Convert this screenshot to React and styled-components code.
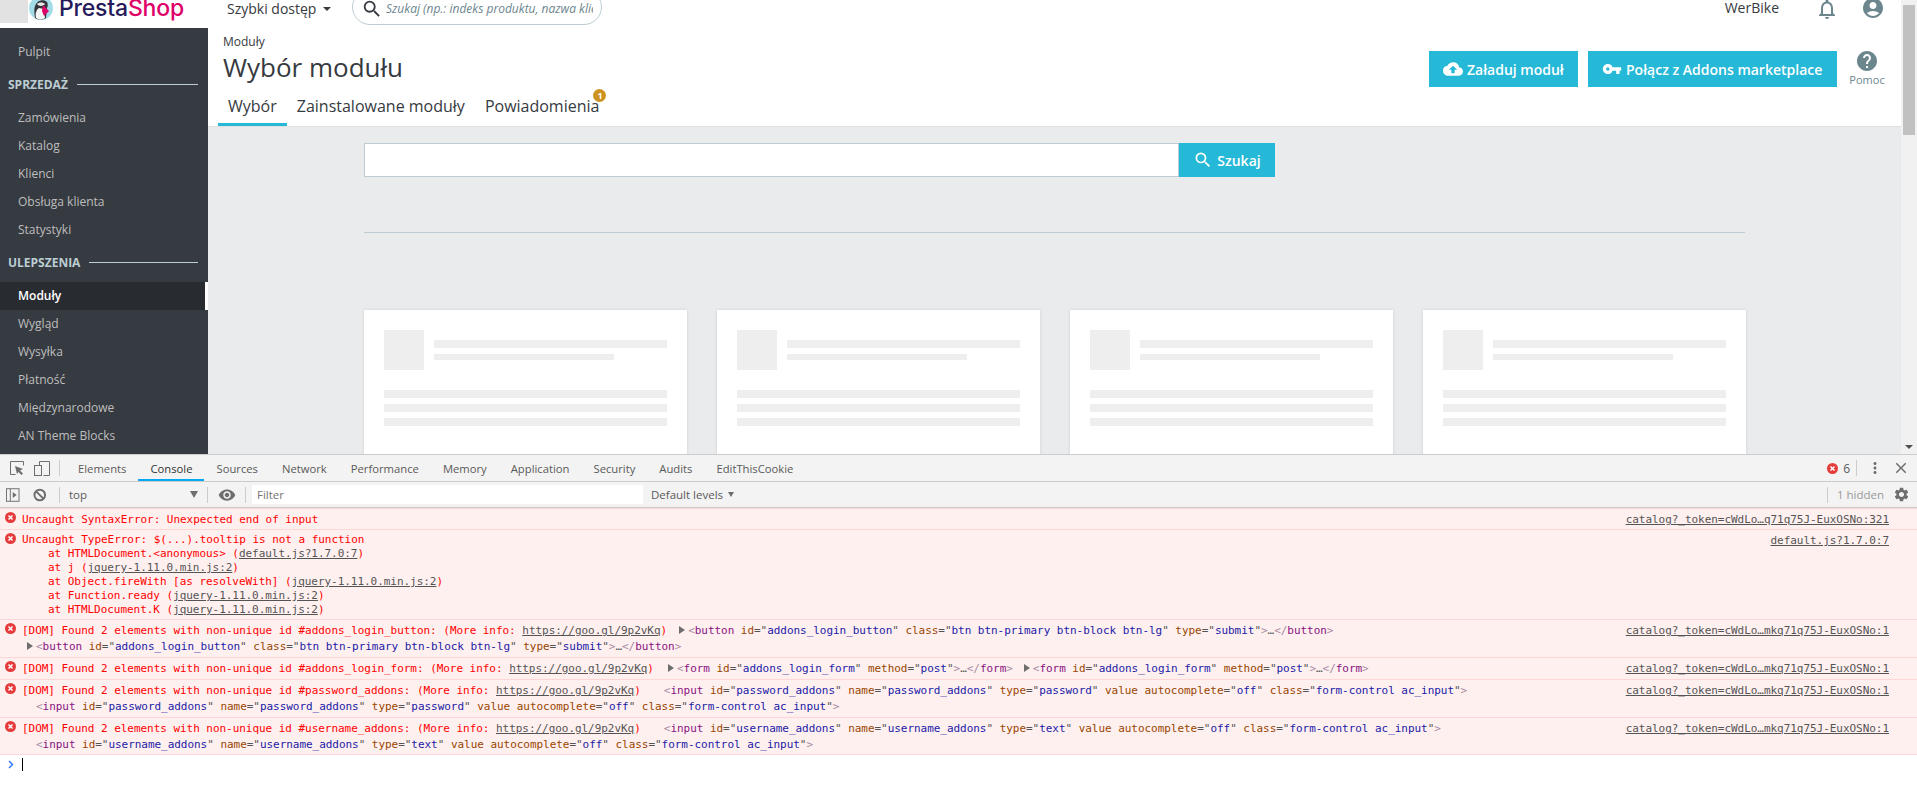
import styled, { createGlobalStyle } from "styled-components";
import {
  MdAccountCircle,
  MdClose,
  MdCloudUpload,
  MdHelp,
  MdMoreVert,
  MdNotificationsNone,
  MdRemoveRedEye,
  MdSearch,
  MdSettings,
  MdVpnKey,
} from "react-icons/md";

const Global = createGlobalStyle`
  html, body { margin: 0; padding: 0; height: 100%; overflow: hidden; }
  body { font-family: "Open Sans", sans-serif; background: #fff; }
  * { box-sizing: border-box; }
`;

const Wrap = styled.div`
  width: 1917px;
  height: 802px;
  display: flex;
  flex-direction: column;
  overflow: hidden;
`;

const Page = styled.div`
  height: 454px;
  display: flex;
  flex: none;
  overflow: hidden;
`;

const PageMain = styled.div`
  flex: 1;
  min-width: 0;
  display: flex;
  flex-direction: column;
`;

const Scrollbar = styled.div`
  width: 16px;
  background: #f1f1f1;
  padding: 5px 2px 0;
  display: flex;
  flex-direction: column;
  align-items: center;
`;

const Thumb = styled.div`
  width: 12px;
  height: 130px;
  background: #c1c1c1;
`;

const ScrollArrow = styled.div`
  margin-top: auto;
  margin-bottom: 5px;
  border-left: 4px solid transparent;
  border-right: 4px solid transparent;
  border-top: 4px solid #505050;
`;

/* header */
const Header = styled.header`
  height: 28px;
  flex: none;
  display: flex;
  align-items: flex-start;
  overflow: hidden;
  background: #fff;
  color: #363a41;
`;

const GreyBox = styled.div`
  width: 28px;
  height: 23px;
  background: #e2e2e2;
`;

const LogoMark = styled.svg`
  width: 24px;
  height: 24px;
  margin: -4px 0 0 1px;
  flex: none;
`;

const Brand = styled.div`
  margin: -7px 0 0 6px;
  width: 118px;
  font-family: Inter, sans-serif;
  font-size: 23px;
  line-height: 30px;
  font-weight: 500;
  letter-spacing: -0.2px;
  white-space: nowrap;
  color: #251b5b;
  span { color: #df0067; }
`;

const Quick = styled.div`
  margin-left: 50px;
  width: 125px;
  display: flex;
  align-items: center;
  gap: 7px;
  font-size: 14px;
  line-height: 18px;
  color: #363a41;
`;

const QuickCaret = styled.i`
  border-left: 4px solid transparent;
  border-right: 4px solid transparent;
  border-top: 4px solid #363a41;
`;

const HeadSearch = styled.div`
  width: 250px;
  height: 36px;
  margin-top: -11px;
  border: 1px solid #bbcdd2;
  border-radius: 18px;
  padding: 0 8px 0 8px;
  display: flex;
  align-items: center;
  gap: 3px;
  color: #363a41;
  svg { flex: none; margin-top: 3px; }
`;

const HeadPlaceholder = styled.div`
  font-size: 12px;
  font-style: italic;
  color: #6c868e;
  white-space: nowrap;
  overflow: hidden;
  width: 209px;
  margin-top: 3px;
`;

const ShopName = styled.div`
  margin-left: auto;
  margin-right: 36px;
  font-size: 14px;
  line-height: 16px;
  color: #363a41;
`;

const TopIcon = styled.div`
  margin-top: ${(p) => p.$top}px;
  margin-right: ${(p) => p.$right}px;
  height: 24px;
  color: #6c868e;
  display: flex;
`;

const Body = styled.div`
  flex: 1;
  display: flex;
  min-height: 0;
`;

/* sidebar */
const Sidebar = styled.nav`
  width: 208px;
  flex: none;
  background: #363a41;
  padding-top: 10px;
`;

const NavItem = styled.div`
  height: 28px;
  line-height: 28px;
  padding-left: 18px;
  font-size: 12px;
  color: ${(p) => (p.$active ? "#fff" : "#bebebe")};
  font-weight: ${(p) => (p.$active ? 600 : 400)};
  background: ${(p) => (p.$active ? "#282b30" : "transparent")};
  border-right: ${(p) => (p.$active ? "3px solid #fff" : "0")};
`;

const NavTitle = styled.div`
  height: 38px;
  padding: 0 10px 2px 8px;
  display: flex;
  align-items: center;
  gap: 9px;
  font-size: 12px;
  font-weight: 700;
  color: #bbcdd2;
  &::after {
    content: "";
    flex: 1;
    height: 1px;
    background: #bbcdd2;
  }
`;

/* content */
const Content = styled.main`
  flex: 1;
  min-width: 0;
  display: flex;
  flex-direction: column;
`;

const PageHead = styled.div`
  height: 99px;
  flex: none;
  display: flex;
  justify-content: space-between;
  background: #fff;
  border-bottom: 1px solid #dfdfdf;
`;

const HeadLeft = styled.div`
  padding-left: 10px;
  display: flex;
  flex-direction: column;
`;

const Crumb = styled.div`
  margin: 7px 0 0 5px;
  font-size: 12px;
  line-height: 14px;
  color: #363a41;
`;

const Title = styled.h1`
  margin: 0 0 0 5px;
  font-size: 26px;
  font-weight: 400;
  line-height: 36px;
  color: #363a41;
`;

const Tabs = styled.div`
  display: flex;
  margin-top: auto;
`;

const Tab = styled.div`
  position: relative;
  height: 38px;
  padding: 7px 10px 0;
  font-size: 16px;
  line-height: 22px;
  color: #363a41;
  border-bottom: 3px solid ${(p) => (p.$active ? "#25b9d7" : "transparent")};
`;

const Badge = styled.span`
  position: absolute;
  top: 1px;
  right: 3px;
  width: 13px;
  height: 13px;
  border-radius: 50%;
  background: #cd9321;
  color: #fff;
  font-size: 9px;
  font-weight: 700;
  line-height: 13px;
  text-align: center;
`;

const Actions = styled.div`
  display: flex;
  align-items: flex-start;
  padding-top: 23px;
  gap: 10px;
`;

const ActionButton = styled.div`
  height: 36px;
  width: ${(p) => p.$w}px;
  padding-left: 14px;
  background: #25b9d7;
  color: #fff;
  font-size: 14px;
  font-weight: 600;
  display: flex;
  align-items: center;
  gap: 4px;
`;

const Help = styled.div`
  width: 50px;
  margin: -2px 9px 0 -5px;
  display: flex;
  flex-direction: column;
  align-items: center;
  font-size: 11px;
  line-height: 14px;
  color: #6c868e;
`;

const Workspace = styled.div`
  flex: 1;
  min-height: 0;
  overflow: hidden;
  background: #eaebec;
  padding: 16px 156px 0 156px;
`;

const SearchRow = styled.div`
  display: flex;
  height: 34px;
  width: 911px;
`;

const SearchInput = styled.div`
  flex: 1;
  background: #fff;
  border: 1px solid #bbcdd2;
`;

const SearchButton = styled.div`
  width: 96px;
  background: #25b9d7;
  color: #fff;
  font-size: 14px;
  font-weight: 600;
  display: flex;
  align-items: center;
  justify-content: center;
  gap: 4px;
`;

const Rule = styled.div`
  height: 1px;
  margin-top: 55px;
  background: #bbcdd2;
`;

const Cards = styled.div`
  margin-top: 77px;
  display: grid;
  grid-template-columns: repeat(4, 323px);
  gap: 30px;
`;

const Card = styled.div`
  height: 180px;
  background: #fff;
  box-shadow: 0 0 3px rgba(0, 0, 0, 0.12);
  padding: 20px;
`;

const CardTop = styled.div`
  display: flex;
  gap: 10px;
  height: 40px;
  margin-bottom: 20px;
`;

const Thumbnail = styled.div`
  width: 40px;
  height: 40px;
  flex: none;
  background: #eee;
`;

const CardHead = styled.div`
  flex: 1;
  padding-top: 10px;
`;

const Bar = styled.div`
  height: ${(p) => p.$h}px;
  width: ${(p) => p.$w || "100%"};
  margin-bottom: 6px;
  background: #eee;
`;

/* devtools */
const DevTools = styled.section`
  flex: 1;
  min-height: 0;
  display: flex;
  flex-direction: column;
  background: #fff;
  font-family: "Open Sans", sans-serif;
`;

const TabBar = styled.div`
  height: 28px;
  flex: none;
  display: flex;
  align-items: stretch;
  background: #f3f3f3;
  border-top: 1px solid #ccc;
  border-bottom: 1px solid #ccc;
  color: #5a5a5a;
  font-size: 11.25px;
`;

const ToolIcons = styled.div`
  width: 66px;
  display: flex;
  align-items: center;
  padding-left: 9px;
  gap: 9px;
  color: #6e6e6e;
`;

const Divider = styled.span`
  width: 1px;
  height: ${(p) => p.$h || 16}px;
  background: #ccc;
  flex: none;
`;

const DevTab = styled.div`
  padding: 0 12px;
  display: flex;
  align-items: center;
  white-space: nowrap;
  color: ${(p) => (p.$active ? "#333" : "#5a5a5a")};
  box-shadow: ${(p) => (p.$active ? "inset 0 -2px 0 #03a9f4" : "none")};
`;

const TabBarEnd = styled.div`
  margin-left: auto;
  display: flex;
  align-items: center;
  padding-right: 7px;
  color: #6e6e6e;
  font-size: 12px;
`;

const ErrCount = styled.span`
  margin: 0 6px 0 5px;
  color: #5a5a5a;
`;

const KebabSlot = styled.span`
  display: flex;
  margin: 0 8px 0 9px;
`;

const FilterBar = styled.div`
  height: 26px;
  flex: none;
  display: flex;
  align-items: center;
  background: #f3f3f3;
  border-bottom: 1px solid #ccc;
  padding-left: 6px;
  font-size: 11.5px;
  color: #5a5a5a;
`;

const FilterIcons = styled.div`
  display: flex;
  align-items: center;
  gap: 13px;
  width: 54px;
  color: #6e6e6e;
`;

const ContextSelect = styled.div`
  width: 138px;
  margin-left: 9px;
  padding-right: 9px;
  display: flex;
  align-items: center;
  justify-content: space-between;
`;

const SelectCaret = styled.i`
  border-left: 4px solid transparent;
  border-right: 4px solid transparent;
  border-top: 7px solid #6e6e6e;
`;

const EyeSlot = styled.div`
  width: 37px;
  display: flex;
  justify-content: center;
  color: #6e6e6e;
`;

const FilterInput = styled.div`
  width: 391px;
  height: 19px;
  margin-left: 6px;
  padding-left: 5px;
  background: #fff;
  line-height: 19px;
  color: #757575;
`;

const Levels = styled.div`
  margin-left: 8px;
  display: flex;
  align-items: center;
  gap: 5px;
`;

const LevelCaret = styled.i`
  border-left: 3px solid transparent;
  border-right: 3px solid transparent;
  border-top: 5px solid #6e6e6e;
`;

const FilterEnd = styled.div`
  margin-left: auto;
  padding-right: 7px;
  display: flex;
  align-items: center;
  gap: 9px;
  color: #9a9a9a;
  svg { color: #6e6e6e; }
`;

const Log = styled.div`
  font-family: "DejaVu Sans Mono", "Liberation Mono", monospace;
  font-size: 11px;
  letter-spacing: -0.04px;
  color: #f00;
  white-space: pre;
`;

const Message = styled.div`
  display: flex;
  height: ${(p) => p.$h}px;
  padding: 3px 28px 0 5px;
  background: #fff0f0;
  border-top: 1px solid #ffd6d6;
  border-bottom: ${(p) => (p.$last ? "1px solid #ffd6d6" : "0")};
  overflow: hidden;
`;

const MsgIcon = styled.svg`
  width: 11px;
  height: 11px;
  flex: none;
  margin: ${(p) => p.$top}px 6px 0 0;
`;

const MsgBody = styled.div`
  flex: 1;
  min-width: 0;
`;

const Line = styled.div`
  height: ${(p) => p.$h || 16}px;
  line-height: ${(p) => p.$h || 16}px;
  padding-left: ${(p) => p.$indent || 0}px;
`;

const SourceLink = styled.a`
  flex: none;
  height: 16px;
  line-height: 16px;
  color: #545454;
  text-decoration: underline;
`;

const InlineLink = styled.span`
  color: #545454;
  text-decoration: underline;
`;

const Caret = styled.i`
  display: inline-block;
  margin: 0 3px 0 ${(p) => p.$left || 0}px;
  border-top: 4px solid transparent;
  border-bottom: 4px solid transparent;
  border-left: 6px solid #6e6e6e;
`;

const Spacer = styled.span`
  display: inline-block;
  width: ${(p) => p.$w}px;
`;

const TagName = styled.span`
  color: #881280;
`;

const Bracket = styled.span`
  color: #a58aa3;
`;

const AttrName = styled.span`
  color: #994500;
`;

const AttrValue = styled.span`
  color: #1a1aa6;
`;

const Plain = styled.span`
  color: #545454;
`;

const Prompt = styled.div`
  height: 16px;
  margin-top: 1px;
  padding-left: 8px;
  display: flex;
  align-items: center;
  gap: 8px;
`;

const Cursor = styled.span`
  width: 1px;
  height: 13px;
  background: #000;
`;

const navFirst = ["Zamówienia", "Katalog", "Klienci", "Obsługa klienta", "Statystyki"];
const navSecond = ["Wygląd", "Wysyłka", "Płatność", "Międzynarodowe", "AN Theme Blocks"];
const devTabs = ["Elements", "Console", "Sources", "Network", "Performance", "Memory", "Application", "Security", "Audits", "EditThisCookie"];
const stack = [
  ["HTMLDocument.<anonymous> (", "default.js?1.7.0:7", ")"],
  ["j (", "jquery-1.11.0.min.js:2", ")"],
  ["Object.fireWith [as resolveWith] (", "jquery-1.11.0.min.js:2", ")"],
  ["Function.ready (", "jquery-1.11.0.min.js:2", ")"],
  ["HTMLDocument.K (", "jquery-1.11.0.min.js:2", ")"],
];

const ErrorIcon = ({ top = 0 }) => (
  <MsgIcon $top={top} viewBox="0 0 11 11">
    <circle cx="5.5" cy="5.5" r="5.5" fill="#e53b3b" />
    <path d="M3.5 3.5l4 4M7.5 3.5l-4 4" stroke="#fff" strokeWidth="1.5" />
  </MsgIcon>
);

const Penguin = () => (
  <LogoMark viewBox="0 0 24 24">
    <circle cx="12" cy="12" r="12" fill="#a4dbe8" />
    <path d="M6 22c-1-6-1-11 1-14 2-4 8-5 11-2 1 2 1 4 0 6l-1 10c-3 2-8 2-11 0z" fill="#34343c" />
    <path d="M7 22c-1-4 0-8 3-10l5 1 1 9c-3 2-6 2-9 0z" fill="#f4f4f4" />
    <path d="M8 8c2-2 6-2 8 0-1 2-6 3-8 0z" fill="#e8e8e8" />
    <path d="M14 9l6 6-5 5-2-5z" fill="#df0067" />
  </LogoMark>
);

const Attr = ({ name, value }) => (
  <>
    {" "}
    <AttrName>{name}</AttrName>
    <Plain>="</Plain>
    <AttrValue>{value}</AttrValue>
    <Plain>"</Plain>
  </>
);

const Tag = ({ name, attrs }) => (
  <>
    <Bracket>&lt;</Bracket>
    <TagName>{name}</TagName>
    {attrs.map(([n, v]) => (
      <Attr key={n} name={n} value={v} />
    ))}
    <Bracket>&gt;</Bracket>
    <Plain>…</Plain>
    <Bracket>&lt;/</Bracket>
    <TagName>{name}</TagName>
    <Bracket>&gt;</Bracket>
  </>
);

const More = () => (
  <>
    (More info: <InlineLink>https://goo.gl/9p2vKq</InlineLink>)
  </>
);

const buttonAttrs = [
  ["id", "addons_login_button"],
  ["class", "btn btn-primary btn-block btn-lg"],
  ["type", "submit"],
];
const formAttrs = [
  ["id", "addons_login_form"],
  ["method", "post"],
];

const InputTag = ({ field, type }) => (
  <>
    <Bracket>&lt;</Bracket>
    <TagName>input</TagName>
    <Attr name="id" value={field} />
    <Attr name="name" value={field} />
    <Attr name="type" value={type} /> <AttrName>value</AttrName> <AttrName>autocomplete</AttrName>
    <Plain>="</Plain>
    <AttrValue>off</AttrValue>
    <Plain>"</Plain>
    <Attr name="class" value="form-control ac_input" />
    <Bracket>&gt;</Bracket>
  </>
);

const SkeletonCard = () => (
  <Card>
    <CardTop>
      <Thumbnail />
      <CardHead>
        <Bar $h={8} />
        <Bar $h={6} $w="180px" />
      </CardHead>
    </CardTop>
    <Bar $h={8} />
    <Bar $h={8} />
    <Bar $h={8} />
  </Card>
);

export default function App() {
  return (
    <Wrap>
      <Global />
      <Page>
        <PageMain>
          <Header>
            <GreyBox />
            <Penguin />
            <Brand>
              Presta<span>Shop</span>
            </Brand>
            <Quick>
              Szybki dostęp <QuickCaret />
            </Quick>
            <HeadSearch>
              <MdSearch size={22} />
              <HeadPlaceholder>Szukaj (np.: indeks produktu, nazwa klienta…)</HeadPlaceholder>
            </HeadSearch>
            <ShopName>WerBike</ShopName>
            <TopIcon $top={-3} $right={22}>
              <MdNotificationsNone size={24} />
            </TopIcon>
            <TopIcon $top={-4} $right={16}>
              <MdAccountCircle size={24} />
            </TopIcon>
          </Header>
          <Body>
            <Sidebar>
              <NavItem>Pulpit</NavItem>
              <NavTitle>SPRZEDAŻ</NavTitle>
              {navFirst.map((n) => (
                <NavItem key={n}>{n}</NavItem>
              ))}
              <NavTitle>ULEPSZENIA</NavTitle>
              <NavItem $active>Moduły</NavItem>
              {navSecond.map((n) => (
                <NavItem key={n}>{n}</NavItem>
              ))}
            </Sidebar>
            <Content>
              <PageHead>
                <HeadLeft>
                  <Crumb>Moduły</Crumb>
                  <Title>Wybór modułu</Title>
                  <Tabs>
                    <Tab $active>Wybór</Tab>
                    <Tab>Zainstalowane moduły</Tab>
                    <Tab>
                      Powiadomienia
                      <Badge>1</Badge>
                    </Tab>
                  </Tabs>
                </HeadLeft>
                <Actions>
                  <ActionButton $w={149}>
                    <MdCloudUpload size={20} /> Załaduj moduł
                  </ActionButton>
                  <ActionButton $w={249}>
                    <MdVpnKey size={20} /> Połącz z Addons marketplace
                  </ActionButton>
                  <Help>
                    <MdHelp size={24} />
                    Pomoc
                  </Help>
                </Actions>
              </PageHead>
              <Workspace>
                <SearchRow>
                  <SearchInput />
                  <SearchButton>
                    <MdSearch size={20} /> Szukaj
                  </SearchButton>
                </SearchRow>
                <Rule />
                <Cards>
                  <SkeletonCard />
                  <SkeletonCard />
                  <SkeletonCard />
                  <SkeletonCard />
                </Cards>
              </Workspace>
            </Content>
          </Body>
        </PageMain>
        <Scrollbar>
          <Thumb />
          <ScrollArrow />
        </Scrollbar>
      </Page>

      <DevTools>
        <TabBar>
          <ToolIcons>
            <svg width="16" height="16" viewBox="0 0 16 16" fill="none" stroke="#6e6e6e">
              <path d="M6.5 14.5h-5v-13h13v4" />
              <path d="M6 6l8 3-3 1.5 3 3-1.5 1.5-3-3L8 14z" fill="#6e6e6e" stroke="none" />
            </svg>
            <svg width="16" height="17" viewBox="0 0 16 17" fill="none" stroke="#6e6e6e">
              <path d="M5.5 5V1.5h10v14h-6" />
              <rect x="0.5" y="5.5" width="7" height="10" />
            </svg>
            <Divider />
          </ToolIcons>
          {devTabs.map((t) => (
            <DevTab key={t} $active={t === "Console"}>
              {t}
            </DevTab>
          ))}
          <TabBarEnd>
            <svg width="11" height="11" viewBox="0 0 11 11">
              <circle cx="5.5" cy="5.5" r="5.5" fill="#e53b3b" />
              <path d="M3.5 3.5l4 4M7.5 3.5l-4 4" stroke="#fff" strokeWidth="1.5" />
            </svg>
            <ErrCount>6</ErrCount>
            <Divider />
            <KebabSlot>
              <MdMoreVert size={18} />
            </KebabSlot>
            <MdClose size={18} />
          </TabBarEnd>
        </TabBar>

        <FilterBar>
          <FilterIcons>
            <svg width="14" height="14" viewBox="0 0 14 14" fill="none" stroke="#6e6e6e">
              <rect x="0.5" y="0.5" width="13" height="13" />
              <path d="M4.5 0.5v13" />
              <path d="M7 4l4 3-4 3z" fill="#6e6e6e" stroke="none" />
            </svg>
            <svg width="14" height="14" viewBox="0 0 14 14" fill="none" stroke="#6e6e6e" strokeWidth="2">
              <circle cx="7" cy="7" r="5.5" />
              <path d="M3 3l8 8" />
            </svg>
            <Divider />
          </FilterIcons>
          <ContextSelect>
            top <SelectCaret />
          </ContextSelect>
          <Divider />
          <EyeSlot>
            <MdRemoveRedEye size={18} />
          </EyeSlot>
          <Divider />
          <FilterInput>Filter</FilterInput>
          <Levels>
            Default levels <LevelCaret />
          </Levels>
          <FilterEnd>
            <Divider />
            1 hidden
            <MdSettings size={17} />
          </FilterEnd>
        </FilterBar>

        <Log>
          <Message $h={21}>
            <ErrorIcon />
            <MsgBody>
              <Line>Uncaught SyntaxError: Unexpected end of input</Line>
            </MsgBody>
            <SourceLink>catalog?_token=cWdLo…q71q75J-EuxOSNo:321</SourceLink>
          </Message>
          <Message $h={90}>
            <ErrorIcon />
            <MsgBody>
              <Line $h={14}>Uncaught TypeError: $(...).tooltip is not a function</Line>
              {stack.map(([a, b, c]) => (
                <Line key={a} $h={14} $indent={26}>
                  at {a}
                  <InlineLink>{b}</InlineLink>
                  {c}
                </Line>
              ))}
            </MsgBody>
            <SourceLink>default.js?1.7.0:7</SourceLink>
          </Message>
          <Message $h={38}>
            <ErrorIcon />
            <MsgBody>
              <Line>
                [DOM] Found 2 elements with non-unique id #addons_login_button: <More />
                <Caret $left={12} />
                <Tag name="button" attrs={buttonAttrs} />
              </Line>
              <Line $indent={5}>
                <Caret />
                <Tag name="button" attrs={buttonAttrs} />
              </Line>
            </MsgBody>
            <SourceLink>catalog?_token=cWdLo…mkq71q75J-EuxOSNo:1</SourceLink>
          </Message>
          <Message $h={22}>
            <ErrorIcon />
            <MsgBody>
              <Line>
                [DOM] Found 2 elements with non-unique id #addons_login_form: <More />
                <Caret $left={14} />
                <Tag name="form" attrs={formAttrs} />
                <Caret $left={11} />
                <Tag name="form" attrs={formAttrs} />
              </Line>
            </MsgBody>
            <SourceLink>catalog?_token=cWdLo…mkq71q75J-EuxOSNo:1</SourceLink>
          </Message>
          <Message $h={38}>
            <ErrorIcon />
            <MsgBody>
              <Line>
                [DOM] Found 2 elements with non-unique id #password_addons: <More />
                <Spacer $w={23} />
                <InputTag field="password_addons" type="password" />
              </Line>
              <Line $indent={14}>
                <InputTag field="password_addons" type="password" />
              </Line>
            </MsgBody>
            <SourceLink>catalog?_token=cWdLo…mkq71q75J-EuxOSNo:1</SourceLink>
          </Message>
          <Message $h={38} $last>
            <ErrorIcon />
            <MsgBody>
              <Line>
                [DOM] Found 2 elements with non-unique id #username_addons: <More />
                <Spacer $w={23} />
                <InputTag field="username_addons" type="text" />
              </Line>
              <Line $indent={14}>
                <InputTag field="username_addons" type="text" />
              </Line>
            </MsgBody>
            <SourceLink>catalog?_token=cWdLo…mkq71q75J-EuxOSNo:1</SourceLink>
          </Message>
          <Prompt>
            <svg width="6" height="9" viewBox="0 0 6 9" fill="none" stroke="#367cf1" strokeWidth="1.5">
              <path d="M1 1l3.5 3.5L1 8" />
            </svg>
            <Cursor />
          </Prompt>
        </Log>
      </DevTools>
    </Wrap>
  );
}
